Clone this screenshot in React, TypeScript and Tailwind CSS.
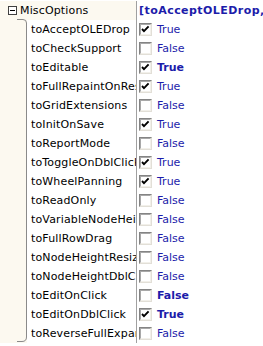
import React from "react"

type Opt = { name: string; on: boolean; bold?: boolean }

const options: Opt[] = [
  { name: "toAcceptOLEDrop", on: true },
  { name: "toCheckSupport", on: false },
  { name: "toEditable", on: true, bold: true },
  { name: "toFullRepaintOnResize", on: true },
  { name: "toGridExtensions", on: false },
  { name: "toInitOnSave", on: true },
  { name: "toReportMode", on: false },
  { name: "toToggleOnDblClick", on: true },
  { name: "toWheelPanning", on: true },
  { name: "toReadOnly", on: false },
  { name: "toVariableNodeHeight", on: false },
  { name: "toFullRowDrag", on: false },
  { name: "toNodeHeightResize", on: false },
  { name: "toNodeHeightDblClick", on: false },
  { name: "toEditOnClick", on: false, bold: true },
  { name: "toEditOnDblClick", on: true, bold: true },
  { name: "toReverseFullExpand", on: false },
]

const CheckBox = ({ on }: { on: boolean }) => (
  <div className="w-[13px] h-[13px] shrink-0 bg-white border border-t-[#848484] border-l-[#848484] border-b-[#e2dfd7] border-r-[#e2dfd7] relative">
    <div className="absolute inset-0 border border-t-[#a8a8a8] border-l-[#a8a8a8] border-b-[#f2f0ea] border-r-[#f2f0ea]" />
    {on && (
      <svg className="absolute left-0 top-0" width="11" height="11" viewBox="0 0 11 11">
        <path d="M2 5 L4 7.2 L8.6 2.4" stroke="#000" strokeWidth="1.9" fill="none" />
      </svg>
    )}
  </div>
)

const App = () => {
  return (
    <div
      className="relative w-[263px] h-[346px] overflow-hidden bg-white text-[11px] leading-none text-black"
      style={{ fontFamily: '"DejaVu Sans", Verdana, sans-serif' }}
    >
      <div className="flex flex-col pt-px">
        {/* category row */}
        <div className="flex h-[19px]">
          <div className="flex items-center w-[136px] bg-[#fcf9f0]">
            <div className="ml-[8px] mr-[3px] w-[9px] h-[9px] border border-[#404040] bg-white flex items-center justify-center">
              <div className="w-[5px] h-px bg-black" />
            </div>
            <span className="whitespace-nowrap tracking-[0.15px]">MiscOptions</span>
          </div>
          <div className="flex-1 flex items-center border-l border-[#a0a0a0] pl-[2px] overflow-hidden">
            <span className="font-bold text-[#1c1caa] whitespace-nowrap tracking-[0.45px]">[toAcceptOLEDrop, toEditable]</span>
          </div>
        </div>
        {options.map((o) => (
          <div key={o.name} className="flex h-[19px]">
            <div className="w-[27px] bg-[#fcf9f0]" />
            <div className="w-[109px] flex items-center pl-[4px] overflow-hidden">
              <span className="whitespace-nowrap tracking-[0.15px]">{o.name}</span>
            </div>
            <div className="flex-1 flex items-center gap-[5px] border-l border-[#a0a0a0] pl-[2px]">
              <CheckBox on={o.on} />
              <span className={o.bold ? "font-bold text-[#1c1caa]" : "text-[#1c1caa]"}>
                {o.on ? "True" : "False"}
              </span>
            </div>
          </div>
        ))}
      </div>
      {/* tree brace line */}
      <svg className="absolute left-0 top-0 pointer-events-none" width="30" height="346">
        <path
          d="M17 19.5 L23 19.5 Q26.5 19.5 26.5 23 L26.5 337 Q26.5 341.5 22 341.5 L17 341.5"
          stroke="#8a8a8a"
          strokeWidth="1"
          fill="none"
        />
      </svg>
    </div>
  )
}

export default App
